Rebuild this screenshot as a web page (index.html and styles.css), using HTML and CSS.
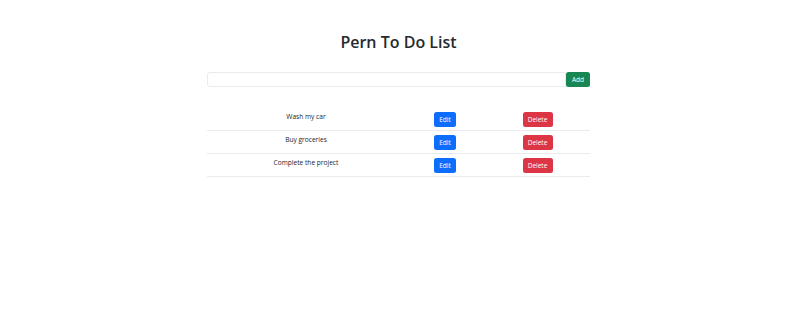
FILE: index.html
```html
<!DOCTYPE html>
<html lang="en">
<head>
<meta charset="utf-8">
<title>Pern To Do List</title>
<link rel="stylesheet" href="styles.css">
</head>
<body>
<div class="app">
  <h1 class="title">Pern To Do List</h1>
  <form class="add-form">
    <input class="add-input" type="text">
    <button class="btn btn-add" type="button">Add</button>
  </form>
  <table class="todos">
    <colgroup>
      <col class="col-desc">
      <col class="col-edit">
      <col class="col-del">
    </colgroup>
    <tbody>
      <tr>
        <td>Wash my car</td>
        <td><button class="btn btn-edit" type="button">Edit</button></td>
        <td><button class="btn btn-del" type="button">Delete</button></td>
      </tr>
      <tr>
        <td>Buy groceries</td>
        <td><button class="btn btn-edit" type="button">Edit</button></td>
        <td><button class="btn btn-del" type="button">Delete</button></td>
      </tr>
      <tr>
        <td>Complete the project</td>
        <td><button class="btn btn-edit" type="button">Edit</button></td>
        <td><button class="btn btn-del" type="button">Delete</button></td>
      </tr>
    </tbody>
  </table>
</div>
</body>
</html>
```
FILE: styles.css
```css
html, body {
  margin: 0;
  padding: 0;
  background: #fff;
}
body {
  font-family: "Open Sans", "Noto Sans", "Liberation Sans", sans-serif;
  color: #212529;
}
.app {
  width: 383px;
  margin: 0 0 0 207px;
  padding-top: 32px;
}
.title {
  margin: 0;
  font-size: 16px;
  line-height: 20px;
  font-weight: 600;
  text-align: center;
  color: #262a2e;
}
.add-form {
  display: flex;
  margin-top: 20px;
  height: 15px;
}
.add-input {
  flex: 1;
  box-sizing: border-box;
  height: 15px;
  margin: 0;
  border: 1px solid #e9ecef;
  border-radius: 3px 0 0 3px;
  padding: 0 4px;
  font: inherit;
  font-size: 7px;
  outline: none;
}
.btn {
  box-sizing: border-box;
  height: 15px;
  margin: 0;
  border: 0;
  border-radius: 2.5px;
  color: #fff;
  font-family: "Open Sans", "Noto Sans", sans-serif;
  font-size: 6.5px;
  line-height: 15px;
  padding: 0;
  cursor: pointer;
}
.btn-add {
  background: #198754;
  width: 24px;
}
.btn-edit {
  background: #0d6efd;
  width: 22px;
}
.btn-del {
  background: #dc3545;
  width: 30px;
}
.todos {
  width: 383px;
  margin-top: 21px;
  border-collapse: collapse;
  table-layout: fixed;
}
.col-desc { width: 198px; }
.col-edit { width: 80px; }
.col-del { width: 105px; }
.todos td {
  padding: 4px 0 3px;
  height: 15px;
  vertical-align: top;
  text-align: center;
  font-size: 6.6px;
  line-height: 10px;
  border-bottom: 1px solid #e9ecef;
}
.todos td .btn {
  display: block;
  margin: 0 auto;
}
```
